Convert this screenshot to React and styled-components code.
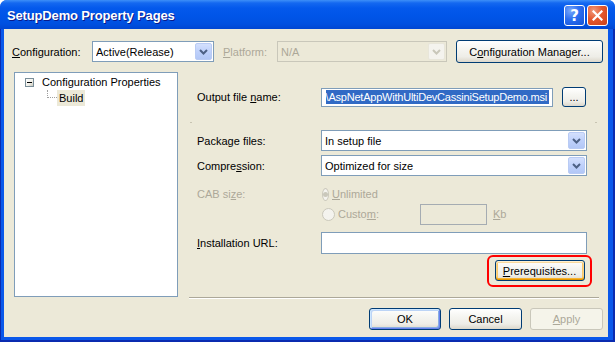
import React from "react";
import styled, { createGlobalStyle, css } from "styled-components";

const Global = createGlobalStyle`
  html, body { margin: 0; padding: 0; background: #ffffff; }
  body { font-family: "Liberation Sans", Arial, sans-serif; font-size: 11px; color: #000; }
  #root { width: 615px; height: 342px; }
  * { box-sizing: border-box; }
`;

const Window = styled.div`
  width: 615px;
  height: 342px;
  display: flex;
  flex-direction: column;
  border-radius: 7px 7px 0 0;
  overflow: hidden;
  background: #0753e6;
`;

const TitleBar = styled.div`
  height: 29px;
  flex-shrink: 0;
  display: flex;
  align-items: flex-start;
  padding: 5px 7px 0 7px;
  background: linear-gradient(
    180deg,
    #3d8ff8 0px,
    #1468f0 3px,
    #0459ec 8px,
    #0055e8 16px,
    #0050e0 24px,
    #0046d2 29px
  );
`;

const TitleText = styled.span`
  flex: 1;
  padding-top: 3px;
  color: #ffffff;
  font: bold 13px "Liberation Sans", Arial, sans-serif;
  text-shadow: 1px 1px 0 #0a1a8a;
  letter-spacing: -0.15px;
`;

const CaptionButtons = styled.div`
  display: flex;
  gap: 2px;
`;

const CaptionButton = styled.div`
  width: 21px;
  height: 21px;
  border: 1px solid #ffffff;
  border-radius: 3px;
  display: flex;
  align-items: center;
  justify-content: center;
  color: #fff;
  font: bold 15px "DejaVu Sans", sans-serif;
  ${(p) =>
    p.$close
      ? css`
          background: radial-gradient(circle at 30% 25%, #f09a7c 0%, #e4582e 45%, #c8401a 100%);
        `
      : css`
          background: radial-gradient(circle at 30% 25%, #7aa9fa 0%, #2c6ef0 45%, #1352d6 100%);
        `}
`;

const Frame = styled.div`
  flex: 1;
  display: flex;
  flex-direction: column;
  padding: 0 7px 5px 4px;
  background: #0a58ea;
  box-shadow: inset 1px 0 0 #0a2bb0, inset -2px 0 0 #0a2bb0, inset 0 -2px 0 #0a2bb0;
`;

const Client = styled.div`
  flex: 1;
  background: #ece9d8;
  display: flex;
  flex-direction: column;
`;

const TopRow = styled.div`
  margin-top: 11px;
  height: 23px;
  padding-left: 8px;
  display: flex;
  align-items: center;
`;

const Label = styled.span`
  display: inline-block;
  flex-shrink: 0;
  width: ${(p) => (p.$w ? `${p.$w}px` : "auto")};
  margin-left: ${(p) => p.$ml || 0}px;
  color: ${(p) => (p.$disabled ? "#aca899" : "#000")};
  white-space: nowrap;
`;

const U = styled.span`
  text-decoration: underline;
`;

const Combo = styled.div`
  width: ${(p) => p.$w}px;
  height: 21px;
  flex-shrink: 0;
  border: 1px solid ${(p) => (p.$disabled ? "#c9c7ba" : "#7f9db9")};
  background: ${(p) => (p.$disabled ? "#ece9d8" : "#ffffff")};
  color: ${(p) => (p.$disabled ? "#aca899" : "#000")};
  display: flex;
  align-items: center;
  padding: 0 1px 0 3px;
`;

const ComboText = styled.span`
  flex: 1;
  white-space: nowrap;
  overflow: hidden;
`;

const DropButton = styled.span`
  width: 17px;
  height: 17px;
  border-radius: 2px;
  display: flex;
  align-items: center;
  justify-content: center;
  ${(p) =>
    p.$disabled
      ? css`
          border: 1px solid #e8e6da;
          background: #f4f3ee;
        `
      : css`
          border: 1px solid #b9cbf4;
          background: linear-gradient(180deg, #d4e0fd 0%, #bfd1fb 50%, #b2c7f6 100%);
        `}
`;

const Chevron = ({ disabled }) => (
  <svg width="9" height="6" viewBox="0 0 9 6">
    <polyline
      points="1,1 4.5,4.5 8,1"
      fill="none"
      stroke={disabled ? "#c9c7ba" : "#4d6185"}
      strokeWidth="2"
    />
  </svg>
);

const Button = styled.button`
  width: ${(p) => p.$w}px;
  height: ${(p) => p.$h || 22}px;
  margin-left: ${(p) => p.$ml || 0}px;
  flex-shrink: 0;
  padding: 0;
  font: 11px "Liberation Sans", Arial, sans-serif;
  color: #000;
  border: 1px solid #003c74;
  border-radius: 3px;
  background: linear-gradient(180deg, #ffffff 0%, #f6f6f2 35%, #eeede7 75%, #dcd7cb 100%);
  ${(p) =>
    p.$default &&
    css`
      box-shadow: inset 1px 1px 0 #cee7ff, inset -1px -1px 0 #6982ee, inset 2px 2px 0 #bcd4f6,
        inset -2px -2px 0 #89ade4;
    `}
  ${(p) =>
    p.$hot &&
    css`
      box-shadow: inset 0 1px 0 #fff0cf, inset 0 2px 0 #f9da9e, inset 0 -1px 0 #e59700,
        inset 0 -2px 0 #f8b330, inset 1px 0 0 #fbd487, inset -1px 0 0 #fbd487, inset 2px 0 0 #f9c76c,
        inset -2px 0 0 #f9c76c;
    `}
  ${(p) =>
    p.disabled &&
    css`
      border-color: #c9c7ba;
      background: #f5f4ea;
      color: #aca899;
    `}
`;

const Main = styled.div`
  margin-top: 9px;
  height: 227px;
  padding-left: 10px;
  display: flex;
  align-items: flex-start;
`;

const Tree = styled.div`
  width: 164px;
  height: 225px;
  border: 1px solid #7f9db9;
  background: #ffffff;
  padding-top: 1px;
`;

const TreeRow = styled.div`
  height: 16px;
  display: flex;
  align-items: center;
  padding-left: ${(p) => p.$indent}px;
`;

const Expander = styled.span`
  width: 9px;
  height: 9px;
  border: 1px solid #7a8e99;
  background: linear-gradient(135deg, #ffffff 0%, #f0efe8 60%, #c9c7ba 100%);
  display: flex;
  align-items: center;
  justify-content: center;
  margin-right: 6px;
  &::after {
    content: "";
    width: 5px;
    height: 1px;
    background: #000;
  }
`;

const Connector = styled.span`
  align-self: flex-start;
  width: 10px;
  height: 8px;
  border-left: 1px dotted #a0a0a0;
  border-bottom: 1px dotted #a0a0a0;
`;

const TreeLabel = styled.span`
  height: 16px;
  line-height: 16px;
  padding: 0 2px;
  white-space: nowrap;
  background: ${(p) => (p.$selected ? "#ece9d8" : "transparent")};
`;

const RightCol = styled.div`
  margin-left: 11px;
  width: 411px;
  height: 227px;
  display: flex;
  flex-direction: column;
`;

const FormRow = styled.div`
  margin-top: ${(p) => p.$mt || 0}px;
  height: ${(p) => p.$h}px;
  padding-left: 8px;
  display: flex;
  align-items: center;
`;

const TextBox = styled.div`
  width: ${(p) => p.$w}px;
  height: ${(p) => p.$h}px;
  flex-shrink: 0;
  border: 1px solid ${(p) => (p.$disabled ? "#a5acb2" : "#7f9db9")};
  background: ${(p) => (p.$disabled ? "#ece9d8" : "#ffffff")};
  padding: 0 3px 0 4px;
  display: flex;
  align-items: center;
  margin-left: ${(p) => p.$ml || 0}px;
`;

const TextClip = styled.div`
  flex: 1;
  overflow: hidden;
  display: flex;
  justify-content: flex-end;
`;

const Selection = styled.span`
  flex-shrink: 0;
  white-space: nowrap;
  background: #316ac5;
  color: #ffffff;
  line-height: 14px;
  height: 14px;
  letter-spacing: -0.22px;
  padding-right: 2px;
`;

const FaintLine = styled.div`
  margin: 15px 3px 0 1px;
  height: 1px;
  background: linear-gradient(
    90deg,
    #c8c4b2 0 2px,
    transparent 2px calc(100% - 2px),
    #c8c4b2 calc(100% - 2px)
  );
`;

const RadioGroup = styled.span`
  display: flex;
  align-items: center;
  gap: 3px;
  width: ${(p) => p.$w || 0}px;
  padding-left: 1px;
  color: #aca899;
  flex-shrink: 0;
`;

const RadioCircle = styled.span`
  width: 13px;
  height: 13px;
  border-radius: 50%;
  border: 1px solid #cac8bb;
  background: #f4f3ee;
  display: flex;
  align-items: center;
  justify-content: center;
  ${(p) =>
    p.$checked &&
    css`
      &::after {
        content: "";
        width: 5px;
        height: 5px;
        border-radius: 50%;
        background: #cac8bb;
      }
    `}
`;

const Spacer = styled.span`
  width: ${(p) => p.$w}px;
  flex-shrink: 0;
`;

const PrereqRow = styled.div`
  margin-top: 1px;
  padding-right: 8px;
  display: flex;
  justify-content: flex-end;
`;

const Highlight = styled.div`
  width: 105px;
  height: 32px;
  border: 2px solid #ff0000;
  border-radius: 6px;
  display: flex;
  align-items: center;
  justify-content: center;
  padding-bottom: 1px;
`;

const Separator = styled.div`
  margin-top: auto;
  margin-right: 1px;
  height: 2px;
  border-top: 1px solid #aca899;
  border-bottom: 1px solid #ffffff;
`;

const BottomRow = styled.div`
  margin-top: 9px;
  height: 22px;
  padding-right: 5px;
  display: flex;
  justify-content: flex-end;
  gap: 8px;
`;

export default function App() {
  return (
    <>
      <Global />
      <Window>
        <TitleBar>
          <TitleText>SetupDemo Property Pages</TitleText>
          <CaptionButtons>
            <CaptionButton>?</CaptionButton>
            <CaptionButton $close>
              <svg width="11" height="11" viewBox="0 0 11 11">
                <path d="M1.5 1.5 L9.5 9.5 M9.5 1.5 L1.5 9.5" stroke="#fff" strokeWidth="2.2" strokeLinecap="square" />
              </svg>
            </CaptionButton>
          </CaptionButtons>
        </TitleBar>
        <Frame>
          <Client>
            <TopRow>
              <Label $w={80}>
                <U>C</U>onfiguration:
              </Label>
              <Combo $w={122}>
                <ComboText>Active(Release)</ComboText>
                <DropButton>
                  <Chevron />
                </DropButton>
              </Combo>
              <Label $w={54} $ml={9} $disabled>
                <U>P</U>latform:
              </Label>
              <Combo $w={170} $disabled>
                <ComboText>N/A</ComboText>
                <DropButton $disabled>
                  <Chevron disabled />
                </DropButton>
              </Combo>
              <Button $w={147} $h={23} $ml={9}>
                C<U>o</U>nfiguration Manager...
              </Button>
            </TopRow>

            <Main>
              <Tree>
                <TreeRow $indent={10}>
                  <Expander />
                  <TreeLabel>Configuration Properties</TreeLabel>
                </TreeRow>
                <TreeRow $indent={32}>
                  <Connector />
                  <TreeLabel $selected>Build</TreeLabel>
                </TreeRow>
              </Tree>

              <RightCol>
                <FormRow $mt={15} $h={20}>
                  <Label $w={124}>
                    Output file <U>n</U>ame:
                  </Label>
                  <TextBox $w={232} $h={19}>
                    <TextClip>
                      <Selection>\AspNetAppWithUltiDevCassiniSetupDemo.msi</Selection>
                    </TextClip>
                  </TextBox>
                  <Button $w={24} $h={20} $ml={9}>
                    ...
                  </Button>
                </FormRow>

                <FaintLine />

                <FormRow $mt={7} $h={21}>
                  <Label $w={124}>
                    Packa<U>g</U>e files:
                  </Label>
                  <Combo $w={266}>
                    <ComboText>In setup file</ComboText>
                    <DropButton>
                      <Chevron />
                    </DropButton>
                  </Combo>
                </FormRow>

                <FormRow $mt={4} $h={21}>
                  <Label $w={124}>
                    Compre<U>s</U>sion:
                  </Label>
                  <Combo $w={266}>
                    <ComboText>Optimized for size</ComboText>
                    <DropButton>
                      <Chevron />
                    </DropButton>
                  </Combo>
                </FormRow>

                <FormRow $mt={8} $h={20}>
                  <Label $w={124} $disabled>
                    CAB si<U>z</U>e:
                  </Label>
                  <RadioGroup>
                    <RadioCircle $checked />
                    <span>
                      <U>U</U>nlimited
                    </span>
                  </RadioGroup>
                </FormRow>

                <FormRow $h={20}>
                  <Spacer $w={124} />
                  <RadioGroup $w={99}>
                    <RadioCircle />
                    <span>
                      Custo<U>m</U>:
                    </span>
                  </RadioGroup>
                  <TextBox $w={67} $h={21} $disabled />
                  <Label $ml={6} $disabled>
                    <U>K</U>b
                  </Label>
                </FormRow>

                <FormRow $mt={8} $h={22}>
                  <Label $w={124}>
                    <U>I</U>nstallation URL:
                  </Label>
                  <TextBox $w={266} $h={22} />
                </FormRow>

                <PrereqRow>
                  <Highlight>
                    <Button $w={90} $h={21} $hot>
                      <U>P</U>rerequisites...
                    </Button>
                  </Highlight>
                </PrereqRow>

                <Separator />
              </RightCol>
            </Main>

            <BottomRow>
              <Button $w={72} $default>
                OK
              </Button>
              <Button $w={73}>Cancel</Button>
              <Button $w={73} disabled>
                <U>A</U>pply
              </Button>
            </BottomRow>
          </Client>
        </Frame>
      </Window>
    </>
  );
}
